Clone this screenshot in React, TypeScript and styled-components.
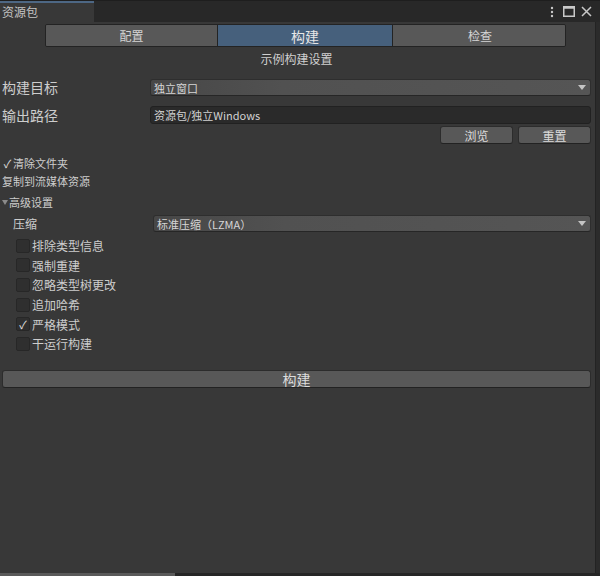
import React from "react";
import styled, { createGlobalStyle } from "styled-components";

const Global = createGlobalStyle`
  html, body { margin: 0; padding: 0; background: #383838; }
  body { font-family: "Noto Sans CJK SC", "Noto Sans", sans-serif; color: #c8c8c8; }
  * { box-sizing: border-box; }
`;

const Window = styled.div`
  width: 600px;
  height: 576px;
  display: flex;
  flex-direction: column;
  background: #383838;
  overflow: hidden;
`;

const TabBar = styled.div`
  height: 22px;
  display: flex;
  align-items: stretch;
  background: #282828;
  border-top: 1px solid #1e1e1e;
`;

const Tab = styled.div`
  width: 94px;
  background: #383838;
  border-top: 2px solid #4d6784;
  font-size: 12px;
  line-height: 18px;
  padding-left: 2px;
  color: #c4c4c4;
`;

const Spacer = styled.div`
  flex: 1;
`;

const HeaderIcons = styled.div`
  display: flex;
  align-items: center;
  gap: 6px;
  padding-right: 8px;
  color: #c8c8c8;
`;

const KebabSlot = styled.span`
  display: inline-flex;
  margin-right: 3px;
`;

const Main = styled.div`
  flex: 1;
  display: flex;
`;

const Content = styled.div`
  flex: 1;
  display: flex;
  flex-direction: column;
  padding: 0 4px 0 2px;
`;

const RightStrip = styled.div`
  width: 5px;
  background: #2b2b2b;
  border-left: 1px solid #232323;
`;

const BottomBar = styled.div`
  height: 3px;
  display: flex;
  background: #262626;
`;

const BottomThumb = styled.div`
  width: 175px;
  background: #5a5a5a;
`;

const Toolbar = styled.div`
  margin: 2px 0 0 43px;
  width: 521px;
  height: 23px;
  display: flex;
  border: 1px solid #232323;
  border-radius: 2px;
  overflow: hidden;
`;

const ToolButton = styled.div<{ $active?: boolean; $width: number }>`
  flex: 0 0 ${(p) => p.$width}px;
  display: flex;
  align-items: center;
  justify-content: center;
  background: ${(p) => (p.$active ? "#46607c" : "#585858")};
  border-left: 1px solid #232323;
  color: ${(p) => (p.$active ? "#e6e6e6" : "#d4d4d4")};
  font-size: ${(p) => (p.$active ? "14px" : "12px")};
  &:first-child { border-left: none; }
`;

const Subtitle = styled.div`
  height: 22px;
  display: flex;
  align-items: center;
  justify-content: center;
  font-size: 12px;
  color: #cfcfcf;
`;

const FieldRow = styled.div<{ $top: number; $labelWidth?: number; $indent?: number }>`
  margin-top: ${(p) => p.$top}px;
  height: 17px;
  display: grid;
  grid-template-columns: ${(p) => p.$labelWidth ?? 148}px 1fr;
  padding-left: ${(p) => p.$indent ?? 0}px;
  align-items: center;
`;

const BigLabel = styled.div`
  font-size: 14px;
  line-height: 17px;
  color: #cdcdcd;
`;

const SmallLabel = styled.div`
  font-size: 12px;
  line-height: 17px;
  color: #cdcdcd;
`;

const Dropdown = styled.div`
  height: 17px;
  background: linear-gradient(90deg, #474747 0%, #515151 30%, #555555 100%);
  border: 1px solid #2e2e2e;
  border-bottom-color: #262626;
  border-radius: 3px;
  display: flex;
  align-items: center;
  padding: 0 4px 0 3px;
  font-size: 11px;
  color: #d6d6d6;
`;

const DropText = styled.span`
  flex: 1;
`;

const Arrow = styled.span`
  width: 0;
  height: 0;
  border-left: 4px solid transparent;
  border-right: 4px solid transparent;
  border-top: 5px solid #c4c4c4;
`;

const TextField = styled.div`
  height: 18px;
  background: #2a2a2a;
  border: 1px solid #212121;
  border-radius: 3px;
  display: flex;
  align-items: center;
  padding-left: 3px;
  font-size: 11px;
  color: #d2d2d2;
`;

const ButtonRow = styled.div`
  margin-top: 3px;
  height: 17px;
  display: flex;
  justify-content: flex-end;
  gap: 5px;
`;

const Button = styled.div<{ $width?: number; $size?: number }>`
  width: ${(p) => (p.$width ? `${p.$width}px` : "auto")};
  flex: ${(p) => (p.$width ? "none" : "1")};
  height: 18px;
  background: #585858;
  border: 1px solid #2c2c2c;
  border-bottom-color: #222;
  border-radius: 3px;
  display: flex;
  align-items: center;
  justify-content: center;
  font-size: ${(p) => p.$size ?? 12}px;
  color: #dcdcdc;
`;

const TextLine = styled.div<{ $top: number; $indent?: number }>`
  margin-top: ${(p) => p.$top}px;
  height: 18px;
  display: flex;
  align-items: center;
  padding-left: ${(p) => p.$indent ?? 0}px;
  font-size: 11px;
  color: #cdcdcd;
`;

const Tick = styled.span`
  font-size: 11px;
  color: #e0e0e0;
  width: 11px;
  display: inline-flex;
  justify-content: center;
`;

const Fold = styled.span`
  width: 0;
  height: 0;
  border-left: 3.5px solid transparent;
  border-right: 3.5px solid transparent;
  border-top: 5px solid #8a8a8a;
  margin-right: 1px;
`;

const CheckList = styled.div`
  margin-top: 4px;
  display: flex;
  flex-direction: column;
  padding-left: 14px;
`;

const CheckRow = styled.div`
  height: 19.6px;
  display: flex;
  align-items: center;
  gap: 2px;
  font-size: 12px;
  color: #cdcdcd;
`;

const Box = styled.span`
  width: 14px;
  height: 14px;
  background: #2f2f2f;
  border: 1px solid #272727;
  border-radius: 2px;
  display: inline-flex;
  align-items: center;
  justify-content: center;
  color: #e4e4e4;
  font-size: 11px;
`;

const BuildWrap = styled.div`
  margin-top: 16px;
  display: flex;
`;

const Kebab = () => (
  <svg width="4" height="12" viewBox="0 0 4 12">
    <circle cx="2" cy="2" r="1.2" fill="#c8c8c8" />
    <circle cx="2" cy="6" r="1.2" fill="#c8c8c8" />
    <circle cx="2" cy="10" r="1.2" fill="#c8c8c8" />
  </svg>
);

const MaxIcon = () => (
  <svg width="12" height="11" viewBox="0 0 12 11">
    <rect x="0.75" y="0.75" width="10.5" height="9.5" fill="none" stroke="#c8c8c8" strokeWidth="1.5" />
    <rect x="0.75" y="0.75" width="10.5" height="2" fill="#c8c8c8" />
  </svg>
);

const CloseIcon = () => (
  <svg width="11" height="11" viewBox="0 0 11 11">
    <path d="M1 1 L10 10 M10 1 L1 10" stroke="#c8c8c8" strokeWidth="1.5" />
  </svg>
);

const options = [
  { label: "排除类型信息", checked: false },
  { label: "强制重建", checked: false },
  { label: "忽略类型树更改", checked: false },
  { label: "追加哈希", checked: false },
  { label: "严格模式", checked: true },
  { label: "干运行构建", checked: false },
];

export default function App() {
  return (
    <>
      <Global />
      <Window>
        <TabBar>
          <Tab>资源包</Tab>
          <Spacer />
          <HeaderIcons>
            <KebabSlot>
              <Kebab />
            </KebabSlot>
            <MaxIcon />
            <CloseIcon />
          </HeaderIcons>
        </TabBar>
        <Main>
          <Content>
            <Toolbar>
              <ToolButton $width={171}>配置</ToolButton>
              <ToolButton $width={175} $active>构建</ToolButton>
              <ToolButton $width={175}>检查</ToolButton>
            </Toolbar>
            <Subtitle>示例构建设置</Subtitle>
            <FieldRow $top={10}>
              <BigLabel>构建目标</BigLabel>
              <Dropdown>
                <DropText>独立窗口</DropText>
                <Arrow />
              </Dropdown>
            </FieldRow>
            <FieldRow $top={10}>
              <BigLabel>输出路径</BigLabel>
              <TextField>资源包/独立Windows</TextField>
            </FieldRow>
            <ButtonRow>
              <Button $width={73}>浏览</Button>
              <Button $width={73}>重置</Button>
            </ButtonRow>
            <TextLine $top={11}>
              <Tick>✓</Tick>清除文件夹
            </TextLine>
            <TextLine $top={0}>复制到流媒体资源</TextLine>
            <TextLine $top={3}>
              <Fold />高级设置
            </TextLine>
            <FieldRow $top={4} $labelWidth={140} $indent={11}>
              <SmallLabel>压缩</SmallLabel>
              <Dropdown>
                <DropText>标准压缩（LZMA）</DropText>
                <Arrow />
              </Dropdown>
            </FieldRow>
            <CheckList>
              {options.map((o) => (
                <CheckRow key={o.label}>
                  <Box>{o.checked ? "✓" : ""}</Box>
                  {o.label}
                </CheckRow>
              ))}
            </CheckList>
            <BuildWrap>
              <Button $size={14}>构建</Button>
            </BuildWrap>
          </Content>
          <RightStrip />
        </Main>
        <BottomBar>
          <BottomThumb />
        </BottomBar>
      </Window>
    </>
  );
}
